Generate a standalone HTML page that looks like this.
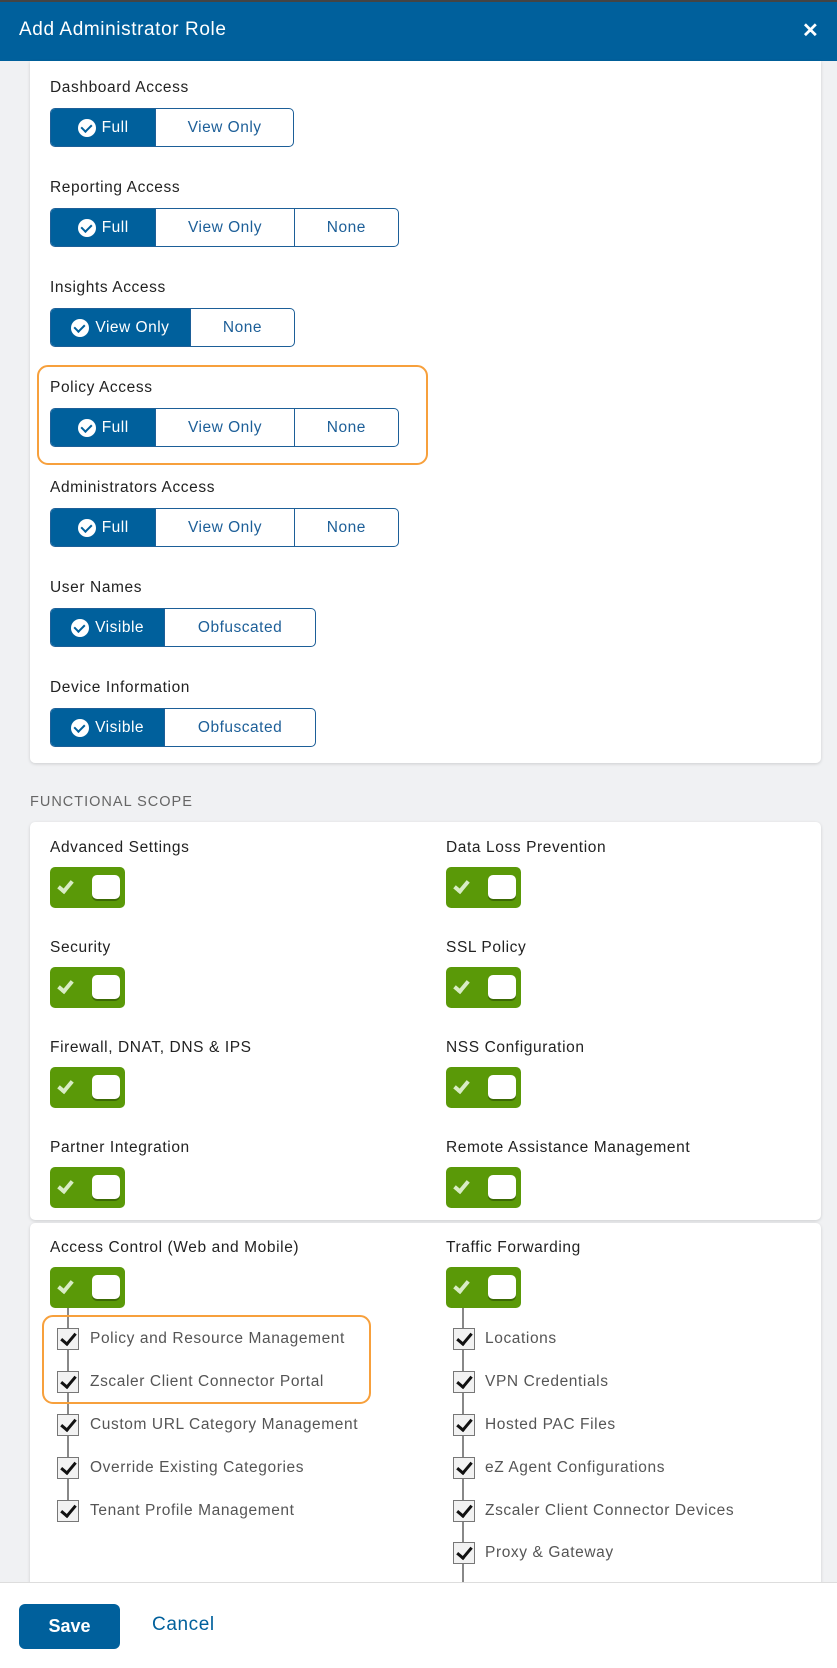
<!DOCTYPE html>
<html><head><meta charset="utf-8"><style>
*{box-sizing:border-box;margin:0;padding:0}
body{width:837px;height:1668px;position:relative;background:#f0f1f3;font-family:"Liberation Sans",sans-serif;overflow:hidden}
.hdr{position:absolute;left:0;top:0;width:837px;height:61px;background:#00609c;border-top:2px solid #444}
.hdr .t{position:absolute;left:19px;top:17px;color:#fff;font-size:19px;letter-spacing:.6px}
.hdr .x{position:absolute;left:802px;top:16px;color:#fff;font-size:20px;font-weight:bold}
.card{position:absolute;left:30px;width:791px;background:#fff;border-radius:5px;box-shadow:0 1px 3px rgba(0,0,0,.15)}
.lbl{position:absolute;font-size:15.5px;color:#222;letter-spacing:.6px}
.grp{position:absolute;height:39px;display:flex;border:1px solid #1d5f98;border-radius:5px;overflow:hidden}
.grp div{height:100%;display:flex;align-items:center;justify-content:center;color:#1d5f98;font-size:15.5px;letter-spacing:.5px;border-left:1px solid #1d5f98}
.grp div:first-child{border-left:none}
.grp .on{background:#00609c;color:#fff}
.ci{display:inline-block;width:18px;height:18px;border-radius:50%;background:#fff;margin-right:6px;position:relative}
.ci:after{content:"";position:absolute;left:5px;top:3px;width:5px;height:8px;border:solid #00609c;border-width:0 2.5px 2.5px 0;transform:rotate(45deg)}
.tg{position:absolute;width:75px;height:41px;background:#5a9908;border-radius:5px}
.tg .k{position:absolute;left:42px;top:8px;width:28px;height:24px;background:#fff;border-radius:5px;box-shadow:0 2px 0 #3c6a05}
.tg .c{position:absolute;left:11px;top:11px;width:9px;height:15px;border:solid #d8ecc5;border-width:0 4px 4px 0;transform:rotate(40deg)}
.or{position:absolute;border:2.5px solid #f7a03c;border-radius:11px}
.vl{position:absolute;width:2px;background:#888}
.cb{position:absolute;width:22px;height:22px;border:1px solid #777;background:#f2f2f2}
.cb:after{content:"";position:absolute;left:6px;top:1px;width:6px;height:12px;border:solid #111;border-width:0 3px 3px 0;transform:rotate(40deg)}
.it{position:absolute;font-size:15.5px;color:#555;letter-spacing:.6px}
</style></head><body>
<div class="hdr"><div class="t">Add Administrator Role</div><div class="x">✕</div></div>
<div class="card" style="top:61px;height:702px;border-radius:0 0 5px 5px"></div>

<div class="lbl" style="left:50px;top:79px">Dashboard Access</div>
<div class="grp" style="left:50px;top:108px;width:244px"><div class="on" style="width:105px"><span class="ci"></span>Full</div><div style="width:139px">View Only</div></div>

<div class="lbl" style="left:50px;top:179px">Reporting Access</div>
<div class="grp" style="left:50px;top:208px;width:349px"><div class="on" style="width:105px"><span class="ci"></span>Full</div><div style="width:139px">View Only</div><div style="width:105px">None</div></div>

<div class="lbl" style="left:50px;top:279px">Insights Access</div>
<div class="grp" style="left:50px;top:308px;width:245px"><div class="on" style="width:140px"><span class="ci"></span>View Only</div><div style="width:105px">None</div></div>

<div class="or" style="left:37px;top:365px;width:391px;height:100px"></div>
<div class="lbl" style="left:50px;top:379px">Policy Access</div>
<div class="grp" style="left:50px;top:408px;width:349px"><div class="on" style="width:105px"><span class="ci"></span>Full</div><div style="width:139px">View Only</div><div style="width:105px">None</div></div>

<div class="lbl" style="left:50px;top:479px">Administrators Access</div>
<div class="grp" style="left:50px;top:508px;width:349px"><div class="on" style="width:105px"><span class="ci"></span>Full</div><div style="width:139px">View Only</div><div style="width:105px">None</div></div>

<div class="lbl" style="left:50px;top:579px">User Names</div>
<div class="grp" style="left:50px;top:608px;width:266px"><div class="on" style="width:114px"><span class="ci"></span>Visible</div><div style="width:152px">Obfuscated</div></div>

<div class="lbl" style="left:50px;top:679px">Device Information</div>
<div class="grp" style="left:50px;top:708px;width:266px"><div class="on" style="width:114px"><span class="ci"></span>Visible</div><div style="width:152px">Obfuscated</div></div>

<div style="position:absolute;left:30px;top:794px;font-size:14.5px;color:#666;letter-spacing:1px">FUNCTIONAL SCOPE</div>

<div class="card" style="top:822px;height:398px"></div>
<div class="lbl" style="left:50px;top:839px">Advanced Settings</div>
<div class="lbl" style="left:446px;top:839px">Data Loss Prevention</div>
<div class="tg" style="left:50px;top:867px"><div class="c"></div><div class="k"></div></div>
<div class="tg" style="left:446px;top:867px"><div class="c"></div><div class="k"></div></div>
<div class="lbl" style="left:50px;top:939px">Security</div>
<div class="lbl" style="left:446px;top:939px">SSL Policy</div>
<div class="tg" style="left:50px;top:967px"><div class="c"></div><div class="k"></div></div>
<div class="tg" style="left:446px;top:967px"><div class="c"></div><div class="k"></div></div>
<div class="lbl" style="left:50px;top:1039px">Firewall, DNAT, DNS &amp; IPS</div>
<div class="lbl" style="left:446px;top:1039px">NSS Configuration</div>
<div class="tg" style="left:50px;top:1067px"><div class="c"></div><div class="k"></div></div>
<div class="tg" style="left:446px;top:1067px"><div class="c"></div><div class="k"></div></div>
<div class="lbl" style="left:50px;top:1139px">Partner Integration</div>
<div class="lbl" style="left:446px;top:1139px">Remote Assistance Management</div>
<div class="tg" style="left:50px;top:1167px"><div class="c"></div><div class="k"></div></div>
<div class="tg" style="left:446px;top:1167px"><div class="c"></div><div class="k"></div></div>

<div class="card" style="top:1223px;height:380px"></div>
<div class="lbl" style="left:50px;top:1239px">Access Control (Web and Mobile)</div>
<div class="lbl" style="left:446px;top:1239px">Traffic Forwarding</div>
<div class="vl" style="left:67px;top:1306px;height:206px"></div>
<div class="vl" style="left:462px;top:1306px;height:280px"></div>
<div class="tg" style="left:50px;top:1267px"><div class="c"></div><div class="k"></div></div>
<div class="tg" style="left:446px;top:1267px"><div class="c"></div><div class="k"></div></div>
<div class="or" style="left:42px;top:1315px;width:329px;height:89px"></div>

<div class="cb" style="left:57px;top:1328px"></div><div class="it" style="left:90px;top:1330px">Policy and Resource Management</div>
<div class="cb" style="left:57px;top:1371px"></div><div class="it" style="left:90px;top:1373px">Zscaler Client Connector Portal</div>
<div class="cb" style="left:57px;top:1414px"></div><div class="it" style="left:90px;top:1416px">Custom URL Category Management</div>
<div class="cb" style="left:57px;top:1457px"></div><div class="it" style="left:90px;top:1459px">Override Existing Categories</div>
<div class="cb" style="left:57px;top:1500px"></div><div class="it" style="left:90px;top:1502px">Tenant Profile Management</div>

<div class="cb" style="left:453px;top:1328px"></div><div class="it" style="left:485px;top:1330px">Locations</div>
<div class="cb" style="left:453px;top:1371px"></div><div class="it" style="left:485px;top:1373px">VPN Credentials</div>
<div class="cb" style="left:453px;top:1414px"></div><div class="it" style="left:485px;top:1416px">Hosted PAC Files</div>
<div class="cb" style="left:453px;top:1457px"></div><div class="it" style="left:485px;top:1459px">eZ Agent Configurations</div>
<div class="cb" style="left:453px;top:1500px"></div><div class="it" style="left:485px;top:1502px">Zscaler Client Connector Devices</div>
<div class="cb" style="left:453px;top:1542px"></div><div class="it" style="left:485px;top:1544px">Proxy &amp; Gateway</div>

<div style="position:absolute;left:0;top:1582px;width:837px;height:86px;background:#fff;border-top:1px solid #ddd"></div>
<div style="position:absolute;left:19px;top:1604px;width:101px;height:45px;background:#00609c;border-radius:6px;color:#fff;font-size:18px;font-weight:bold;display:flex;align-items:center;justify-content:center">Save</div>
<div style="position:absolute;left:152px;top:1614px;color:#00609c;font-size:19px;letter-spacing:.6px">Cancel</div>
</body></html>
